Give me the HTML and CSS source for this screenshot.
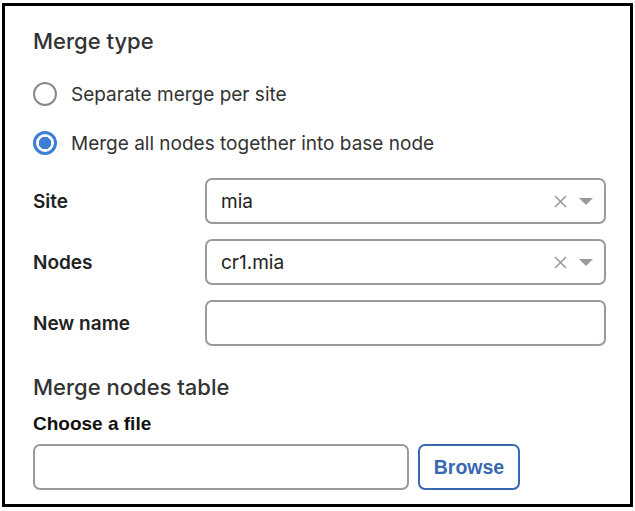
FILE: index.html
```html
<!DOCTYPE html>
<html lang="en">
<head>
    <meta charset="UTF-8">
    <title>Merge nodes</title>
    <link rel="stylesheet" href="styles.css">
</head>
<body>
    <div class="frame">
        <h2 class="title">Merge type</h2>

        <label class="radio">
            <span class="dot"></span>
            <span>Separate merge per site</span>
        </label>
        <label class="radio">
            <span class="dot dot_on"></span>
            <span>Merge all nodes together into base node</span>
        </label>

        <div class="row">
            <span class="label">Site</span>
            <div class="select">
                <span class="value">mia</span>
                <svg class="clear" width="13" height="13" viewBox="0 0 13 13"><path d="M1 1L12 12M12 1L1 12" stroke="#9a9a9a" stroke-width="1.6" fill="none"/></svg>
                <span class="caret"></span>
            </div>
        </div>
        <div class="row">
            <span class="label">Nodes</span>
            <div class="select">
                <span class="value">cr1.mia</span>
                <svg class="clear" width="13" height="13" viewBox="0 0 13 13"><path d="M1 1L12 12M12 1L1 12" stroke="#9a9a9a" stroke-width="1.6" fill="none"/></svg>
                <span class="caret"></span>
            </div>
        </div>
        <div class="row">
            <span class="label">New name</span>
            <div class="select"></div>
        </div>

        <h2 class="title title_small">Merge nodes table</h2>
        <div class="file_label">Choose a file</div>
        <div class="file">
            <div class="file_box"></div>
            <button class="browse">Browse</button>
        </div>
    </div>
</body>
</html>
```
FILE: styles.css
```css
*{
    margin: 0;
    padding: 0;
    box-sizing: border-box;
}
body{
    font-family: Inter, "Liberation Sans", sans-serif;
    color: #2b2b2b;
    background: #fff;
}
.frame{
    width: 631px;
    height: 504px;
    margin: 3px 0 0 2px;
    border: 3px solid #000;
    padding: 22px 0 0 28px;
}
.title{
    font-size: 22px;
    font-weight: 500;
    line-height: 26px;
    color: #333;
}
.radio{
    display: flex;
    align-items: center;
    gap: 14px;
    font-size: 19px;
    color: #333;
    height: 24px;
    margin-top: 28px;
}
.radio + .radio{
    margin-top: 25px;
}
.dot{
    width: 24px;
    height: 24px;
    border: 2px solid #8a8a8a;
    border-radius: 50%;
}
.dot_on{
    border: 3px solid #3d7fd6;
    background: radial-gradient(circle, #3d7fd6 0 6px, #fff 6.5px);
}
.row{
    display: flex;
    align-items: center;
    margin-top: 15px;
}
.radio + .row{
    margin-top: 23px;
}
.label{
    width: 172px;
    font-size: 19px;
    font-weight: 600;
    color: #222;
}
.select{
    width: 401px;
    height: 46px;
    flex-shrink: 0;
    border: 2px solid #9a9a9a;
    border-radius: 7px;
    display: flex;
    align-items: center;
    padding: 0 11px 0 14px;
    font-size: 19px;
    color: #222;
}
.value{
    flex: 1;
}
.clear{
    margin-right: 12px;
}
.caret{
    width: 0;
    height: 0;
    border-left: 7px solid transparent;
    border-right: 7px solid transparent;
    border-top: 7px solid #999;
}
.title_small{
    margin-top: 28px;
}
.file_label{
    font-family: "Liberation Sans", sans-serif;
    font-size: 19px;
    font-weight: bold;
    color: #111;
    margin-top: 13px;
}
.file{
    display: flex;
    gap: 9px;
    margin-top: 9px;
}
.file_box{
    width: 376px;
    height: 46px;
    border: 2px solid #9a9a9a;
    border-radius: 7px;
}
.browse{
    width: 102px;
    height: 46px;
    border: 2px solid #3868b0;
    border-radius: 7px;
    background: #fff;
    color: #3868b0;
    font-family: "Liberation Sans", sans-serif;
    font-size: 19.5px;
    font-weight: bold;
}
```
